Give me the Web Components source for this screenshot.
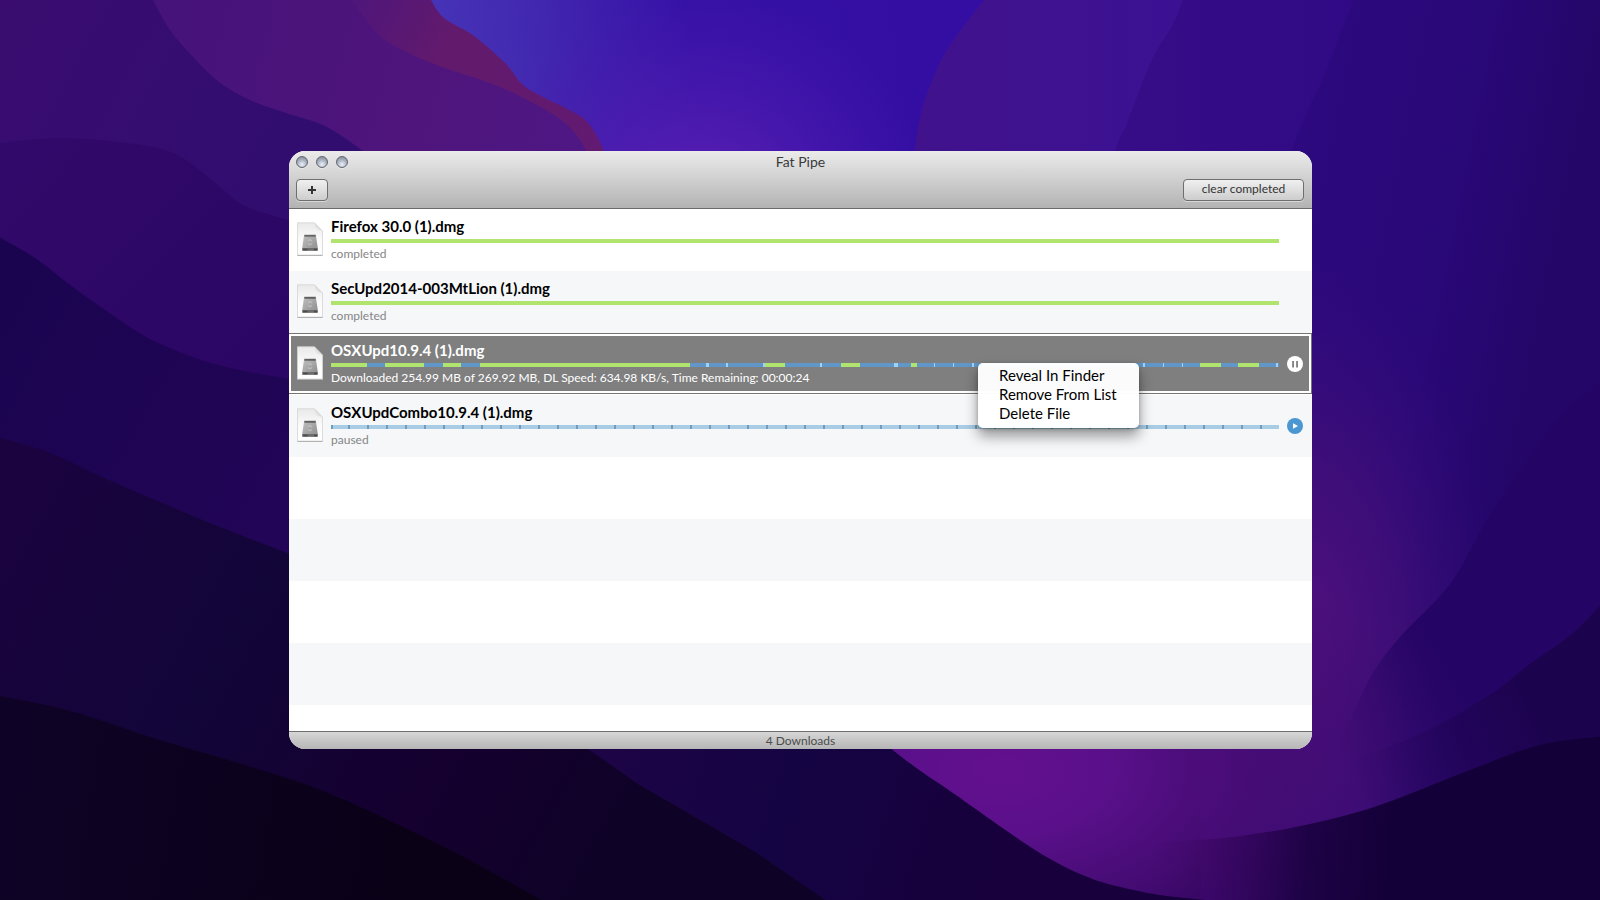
<!DOCTYPE html>
<html lang="en">
<head>
<meta charset="utf-8">
<meta name="viewport" content="width=device-width, initial-scale=1">
<title>Fat Pipe</title>
<style>
  html, body { margin: 0; min-height: 100%; background: #1c0450; }
  body { font-family: Lato, "Open Sans", "Noto Sans", sans-serif; font-size: 12px; color: #333; }
</style>
</head>
<body>
<fp-desktop>
  <fp-wallpaper slot="wallpaper"></fp-wallpaper>
  <fp-window heading="Fat Pipe">
    <fp-button slot="tools" label="Add download"><svg width="8" height="8" viewBox="0 0 8 8" aria-hidden="true"><path d="M3 0h2v3h3v2H5v3H3V5H0V3h3z" fill="#333"/></svg></fp-button>
    <fp-button slot="tools" wide>clear completed</fp-button>
    <fp-download name="Firefox 30.0 (1).dmg" state="completed">completed</fp-download>
    <fp-download name="SecUpd2014-003MtLion (1).dmg" state="completed">completed</fp-download>
    <fp-download name="OSXUpd10.9.4 (1).dmg" state="active" selected>Downloaded 254.99 MB of 269.92 MB, DL Speed: 634.98 KB/s, Time Remaining: 00:00:24
      <fp-menu slot="menu" items="Reveal In Finder|Remove From List|Delete File"></fp-menu>
    </fp-download>
    <fp-download name="OSXUpdCombo10.9.4 (1).dmg" state="paused">paused</fp-download>
    <span slot="status">4 Downloads</span>
  </fp-window>
</fp-desktop>

<script>
const define = (name, html, setup) => {
  const template = document.createElement('template');
  template.innerHTML = html;
  customElements.define(name, class extends HTMLElement {
    constructor() {
      super();
      this.attachShadow({ mode: 'open' }).append(template.content.cloneNode(true));
    }
    connectedCallback() { if (setup) setup(this, this.shadowRoot); }
  });
};

define('fp-desktop', `
  <style>
    :host { display: flex; position: relative; box-sizing: border-box; min-height: 100vh; padding: 151px 288px 151px 289px; overflow: hidden; }
    ::slotted(fp-window) { flex: 1; min-width: 0; }
    @media (max-width: 1100px) { :host { padding: 40px; } }
  </style>
  <slot name="wallpaper"></slot><slot></slot>`);

/* Each ridge is [ridge line points, corner points that close the shape, fill]. */
const RIDGES = [
  [[[984,0],[953,41],[938,67],[922,110],[915,150],[905,240]], [[900,460],[1600,460],[1600,0]], 'url(#r1)'],
  [[[1183,0],[1172,26],[1152,60],[1127,123],[1114,155],[1090,260]], [[1090,460],[1600,460],[1600,0]], 'url(#r2)'],
  [[[1353,0],[1325,73],[1310,105],[1297,135],[1285,170],[1240,300]], [[1200,900],[1600,900],[1600,0]], 'url(#r3)'],
  [[[1200,200],[1600,200]], [[1600,900],[1200,900]], 'url(#mag)'],
  [[[1605,378],[1563,413],[1527,460],[1487,520],[1450,584],[1400,637],[1373,673],[1350,720],[1330,770]], [[1330,860],[1600,860]], 'url(#rd)'],
  [[[1605,600],[1573,633],[1530,664],[1497,690],[1453,717],[1413,737],[1340,765]], [[1300,900],[1600,900]], 'url(#rdd)'],
  [[[640,300],[1600,300]], [[1600,900],[640,900]], 'url(#pur)'],
  [[[1605,736],[1540,745],[1470,770],[1380,805],[1310,824],[1233,837],[1160,842]], [[1100,900],[1600,900]], 'url(#hill)'],
  [[[431,0],[444,18],[474,36],[505,63],[522,84],[541,96],[577,114],[592,128],[606,155]], [[606,200],[150,200],[150,0]], 'url(#red)'],
  [[[352,0],[368,22],[388,42],[434,64],[500,87],[551,113],[574,132],[589,155]], [[589,200],[150,200],[150,0]], 'url(#pl)'],
  [[[153,0],[170,30],[194,58],[219,82],[250,100],[286,113],[327,127],[370,156]], [[370,300],[0,300],[0,0]], 'url(#l0)'],
  [[[0,143],[60,138],[128,143],[165,150],[189,162],[219,186],[238,202],[255,210],[295,222]], [[295,460],[0,460]], 'url(#l1)'],
  [[[-10,232],[35,258],[77,290],[138,332],[170,348],[204,361],[245,371],[295,380]], [[295,620],[0,620]], 'url(#l2)'],
  [[[-10,435],[48,452],[100,476],[153,499],[220,527],[295,556]], [[295,740],[620,740],[830,900],[0,900]], 'url(#l3)'],
  [[[-10,694],[51,706],[100,720],[153,738],[225,759],[296,781],[340,798],[378,815],[460,855],[545,902]], [[0,900]], 'url(#l4)'],
  [[[880,740],[915,767],[953,793],[1004,829],[1035,850],[1065,867],[1090,878],[1116,886],[1160,895],[1215,901]], [[828,902],[757,853],[714,828],[638,784],[575,740]], 'url(#l5)']
];

/* Catmull-Rom curve through the points, written as cubic Béziers. */
function ridgePath(points, corners) {
  let d = `M${points[0]}`;
  for (let i = 0; i < points.length - 1; i++) {
    const a = points[i - 1] || points[i], b = points[i], c = points[i + 1], e = points[i + 2] || c;
    d += `C${b[0] + (c[0] - a[0]) / 6} ${b[1] + (c[1] - a[1]) / 6} ${c[0] - (e[0] - b[0]) / 6} ${c[1] - (e[1] - b[1]) / 6} ${c[0]} ${c[1]}`;
  }
  return d + corners.map(p => `L${p}`).join('') + 'Z';
}

define('fp-wallpaper', `
  <style>
    :host { display: block; position: absolute; inset: 0; }
    svg { display: block; width: 100%; height: 100%; }
  </style>
  <svg viewBox="0 0 1600 900" preserveAspectRatio="xMidYMid slice" aria-hidden="true">
    <defs>
      <linearGradient id="sky" gradientUnits="userSpaceOnUse" x1="430" y1="60" x2="950" y2="0"><stop offset="0" stop-color="#4634b8"/><stop offset=".2" stop-color="#4228b0"/><stop offset=".5" stop-color="#3611a6"/><stop offset="1" stop-color="#340ea3"/></linearGradient>
      <radialGradient id="glow" gradientUnits="userSpaceOnUse" cx="700" cy="220" r="230"><stop offset="0" stop-color="#5e1fb4"/><stop offset=".35" stop-color="#541db2" stop-opacity=".8"/><stop offset="1" stop-color="#4a18ae" stop-opacity="0"/></radialGradient>
      <linearGradient id="r1" gradientUnits="userSpaceOnUse" x1="920" y1="60" x2="1180" y2="60"><stop offset="0" stop-color="#41128c"/><stop offset="1" stop-color="#3b1193"/></linearGradient>
      <linearGradient id="r2" gradientUnits="userSpaceOnUse" x1="1120" y1="0" x2="1350" y2="0"><stop offset="0" stop-color="#370c87"/><stop offset="1" stop-color="#300a86"/></linearGradient>
      <linearGradient id="r3" gradientUnits="userSpaceOnUse" x1="1300" y1="0" x2="1600" y2="60"><stop offset="0" stop-color="#2e0980"/><stop offset=".6" stop-color="#290878"/><stop offset="1" stop-color="#240668"/></linearGradient>
      <radialGradient id="mag" gradientUnits="userSpaceOnUse" cx="0" cy="0" r="1" gradientTransform="translate(1300 660) scale(200 400)"><stop offset="0" stop-color="#541180"/><stop offset=".5" stop-color="#461078" stop-opacity=".7"/><stop offset="1" stop-color="#3a0e7a" stop-opacity="0"/></radialGradient>
      <linearGradient id="rd" gradientUnits="userSpaceOnUse" x1="1330" y1="740" x2="1450" y2="670"><stop offset="0" stop-color="#2a0666" stop-opacity="0"/><stop offset="1" stop-color="#240464"/></linearGradient>
      <linearGradient id="rdd" gradientUnits="userSpaceOnUse" x1="1360" y1="800" x2="1540" y2="720"><stop offset="0" stop-color="#220458" stop-opacity="0"/><stop offset="1" stop-color="#1c034e"/></linearGradient>
      <radialGradient id="pur" gradientUnits="userSpaceOnUse" cx="0" cy="0" r="1" gradientTransform="translate(1000 770) scale(440 260)"><stop offset="0" stop-color="#64108e"/><stop offset=".25" stop-color="#5a108a"/><stop offset=".55" stop-color="#480c76" stop-opacity=".9"/><stop offset="1" stop-color="#34086a" stop-opacity="0"/></radialGradient>
      <linearGradient id="hill" gradientUnits="userSpaceOnUse" x1="1150" y1="840" x2="1390" y2="860"><stop offset="0" stop-color="#44086a" stop-opacity="0"/><stop offset=".3" stop-color="#36055e" stop-opacity=".7"/><stop offset=".65" stop-color="#1e0246"/><stop offset="1" stop-color="#140038"/></linearGradient>
      <linearGradient id="l0" gradientUnits="userSpaceOnUse" x1="0" y1="0" x2="300" y2="160"><stop offset="0" stop-color="#3a0c70"/><stop offset="1" stop-color="#310d70"/></linearGradient>
      <linearGradient id="l1" gradientUnits="userSpaceOnUse" x1="0" y1="140" x2="250" y2="380"><stop offset="0" stop-color="#31096a"/><stop offset="1" stop-color="#2b0664"/></linearGradient>
      <linearGradient id="l2" gradientUnits="userSpaceOnUse" x1="0" y1="300" x2="290" y2="460"><stop offset="0" stop-color="#1a0450"/><stop offset="1" stop-color="#220556"/></linearGradient>
      <linearGradient id="l3" gradientUnits="userSpaceOnUse" x1="0" y1="560" x2="600" y2="900"><stop offset="0" stop-color="#1a033f"/><stop offset=".35" stop-color="#120538"/><stop offset=".7" stop-color="#15002f"/><stop offset="1" stop-color="#0e0226"/></linearGradient>
      <linearGradient id="l4" gradientUnits="userSpaceOnUse" x1="0" y1="800" x2="400" y2="860"><stop offset="0" stop-color="#0e0326"/><stop offset="1" stop-color="#0a0117"/></linearGradient>
      <linearGradient id="l5" gradientUnits="userSpaceOnUse" x1="600" y1="750" x2="1000" y2="880"><stop offset="0" stop-color="#1d0446"/><stop offset=".45" stop-color="#150443"/><stop offset="1" stop-color="#17003b"/></linearGradient>
      <linearGradient id="pl" gradientUnits="userSpaceOnUse" x1="180" y1="40" x2="580" y2="140"><stop offset="0" stop-color="#46137a"/><stop offset=".6" stop-color="#4f157c"/><stop offset="1" stop-color="#4e1784"/></linearGradient>
      <linearGradient id="red" gradientUnits="userSpaceOnUse" x1="350" y1="20" x2="600" y2="150"><stop offset="0" stop-color="#50167a"/><stop offset=".35" stop-color="#621a6c"/><stop offset="1" stop-color="#621a72"/></linearGradient>
    </defs>
    <rect width="1600" height="900" fill="#1c0450"/>
    <rect x="400" width="600" height="460" fill="url(#sky)"/>
    <rect x="400" width="600" height="460" fill="url(#glow)"/>
    <g></g>
  </svg>`,
  (host, root) => {
    root.querySelector('g').innerHTML = RIDGES
      .map(([points, corners, fill]) => `<path d="${ridgePath(points, corners)}" fill="${fill}"/>`).join('');
  });

define('fp-window', `
  <style>
    :host { display: flex; flex-direction: column; position: relative; border-radius: 16px; overflow: hidden; background: #fff; }
    header { background: linear-gradient(#ebebec, #d2d2d2 45%, #b3b3b3); border-bottom: 1px solid #6b6b6b; }
    .bar { display: grid; grid-template-columns: 1fr auto 1fr; align-items: center; height: 22px; padding: 0 7px; }
    .lights { display: flex; gap: 8px; }
    .lights button { width: 12px; height: 12px; padding: 0; border: 1px solid #62666e; border-radius: 50%; background: radial-gradient(circle at 50% 75%, #dfe6f0 10%, #a4acba 55%, #7d8490); box-shadow: 0 1px 1px #eeea; }
    h1 { margin: 0; font-size: 14px; font-weight: 400; line-height: 22px; color: #3a3a3a; }
    .tools { display: flex; justify-content: space-between; padding: 6px 8px 7px 7px; }
    main { flex: 1 0 auto; background: repeating-linear-gradient(#fff 0 62px, #f5f7f9 62px 124px); }
    footer { display: flex; justify-content: center; border-top: 1px solid #6f6f6f; background: linear-gradient(#d6d6d6, #b6b6b6); color: #4c4c4c; font-size: 12px; line-height: 17px; }
  </style>
  <header>
    <div class="bar">
      <div class="lights"><button aria-label="Close"></button><button aria-label="Minimize"></button><button aria-label="Zoom"></button></div>
      <h1></h1>
    </div>
    <div class="tools"><slot name="tools"></slot></div>
  </header>
  <main><slot></slot></main>
  <footer><slot name="status"></slot></footer>`,
  (host, root) => { root.querySelector('h1').textContent = host.getAttribute('heading'); });

define('fp-button', `
  <style>
    :host { display: block; }
    button { display: flex; align-items: center; justify-content: center; box-sizing: border-box; height: 22px; min-width: 32px; padding: 0 8px; border: 1px solid #6e6e6e; border-radius: 4px; background: linear-gradient(#f0f0f0, #cdcdcd); box-shadow: 0 1px 0 #d8d8d8; font: inherit; line-height: 16px; color: #333; }
    :host([wide]) button { min-width: 121px; padding: 0 16px 2px; }
  </style>
  <button><slot></slot></button>`,
  (host, root) => {
    const label = host.getAttribute('label');
    if (label) root.querySelector('button').setAttribute('aria-label', label);
  });

define('fp-disk-icon', `
  <style>:host { display: block; width: 26px; height: 34px; } svg { display: block; }</style>
  <svg width="26" height="34" viewBox="0 0 26 34" aria-hidden="true">
    <defs>
      <linearGradient id="p" x1="0" y1="0" x2="0" y2="1"><stop offset="0" stop-color="#e9e9e9"/><stop offset=".5" stop-color="#fafafa"/><stop offset="1" stop-color="#fff"/></linearGradient>
      <linearGradient id="d" x1="0" y1="0" x2="1" y2="1"><stop offset="0" stop-color="#c0c0c0"/><stop offset="1" stop-color="#8c8c8c"/></linearGradient>
      <linearGradient id="f" x1="0" y1="1" x2="1" y2="0"><stop offset="0" stop-color="#fff"/><stop offset=".5" stop-color="#d8d8d8"/><stop offset=".7" stop-color="#9c9c9c"/></linearGradient>
    </defs>
    <path d="M.5 .8H17.5L25.5 9V33.3H.5Z" fill="url(#p)" stroke="#d4d4d4" stroke-width=".8"/>
    <path d="M.5 33.4H25.5" stroke="#adadad" stroke-width="1"/>
    <path d="M17.5 .8C18.5 4 18 6 17.8 8.2C20.5 7.8 23 7.8 25.5 9.2Z" fill="url(#f)"/>
    <path d="M7.2 12.5H18.8L20.7 25.3V28.6H5.3V25.3Z" fill="url(#d)"/>
    <path d="M7.4 13.2H18.6V14.6H7.4Z" fill="#4b4b4b"/>
    <path d="M5.3 26H20.7V28.8H5.3Z" fill="#6c6c6c"/>
    <path d="M6.2 26.8H10.5V28.2H6.2ZM17 26.8H20V28.2H17Z" fill="#4a4a4a"/>
    <path d="M11 18.5Q13 17 15 18.5M11 21.8Q13 23.2 15 21.8" fill="none" stroke="#d2d2d2" stroke-width=".7"/>
  </svg>`);

/* Chunks are [start, end, colour], in units of a 948-unit file map. */
const GREEN = '#b1e46f', BLUE = '#6096c8', LIGHT = '#9fd2f5', TICK = '#6f9cbc', UNITS = 948;
const MAPS = {
  completed: { base: GREEN, chunks: [] },
  active: { base: BLUE, chunks: [
    [0, 36, GREEN], [54, 93, GREEN], [112, 130, GREEN], [149, 359, GREEN],
    [375, 378, LIGHT], [395, 397, LIGHT], [432, 434, LIGHT], [434, 454, GREEN], [489, 491, LIGHT],
    [510, 529, GREEN], [563, 567, LIGHT], [580, 586, GREEN], [603, 604, LIGHT], [622, 623, LIGHT],
    [641, 643, LIGHT], [812, 814, LIGHT], [832, 833, LIGHT], [851, 852, LIGHT],
    [869, 890, GREEN], [907, 928, GREEN], [945, 947, LIGHT]] },
  paused: { base: '#a8cce4', chunks: [[0, 2, TICK],
    ...Array.from({ length: 49 }, (_, i) => [19 * i + 17, 19 * i + 19, TICK])] }
};

define('fp-chunks', `
  <style>:host { display: block; height: 4px; }</style>`,
  host => {
    const { base, chunks } = MAPS[host.getAttribute('state')];
    const pct = n => (n / UNITS * 100) + '%';
    const stops = [];
    let at = 0;
    for (const [from, to, colour] of chunks) {
      stops.push(`${base} ${pct(at)} ${pct(from)}`, `${colour} ${pct(from)} ${pct(to)}`);
      at = to;
    }
    stops.push(`${base} ${pct(at)} 100%`);
    host.style.background = `linear-gradient(90deg, ${stops.join(', ')})`;
  });

define('fp-download', `
  <style>
    :host { display: flex; position: relative; box-sizing: border-box; height: 62px; gap: 8px; padding: 0 9px 0 8px; }
    fp-disk-icon { margin-top: 13px; }
    .info { flex: 1; min-width: 0; padding-top: 8px; }
    h2 { margin: 0 0 4px; font-size: 15px; font-weight: 700; line-height: 18px; color: #000; }
    p { margin: 3px 0 0; font-size: 12px; line-height: 16px; color: #858585; white-space: nowrap; }
    .act { width: 16px; height: 16px; margin-top: 23px; padding: 0; border: 0; border-radius: 50%; background: #4b97d2; }
    .act svg { display: block; }
    .gap { width: 16px; }
    :host([selected]) { z-index: 1; height: 61px; margin-bottom: 1px; }
    :host([selected])::before { content: ""; position: absolute; z-index: -1; inset: 0; border: solid #757575; border-width: 1px 1px 1px 0; background: #7f7f7f; box-shadow: inset 0 0 0 2px #fff; }
    :host([selected]) h2, :host([selected]) p { color: #fff; }
    :host([selected]) .act { background: #fff; }
  </style>
  <fp-disk-icon></fp-disk-icon>
  <div class="info"><h2></h2><p><slot></slot></p></div>
  <span class="gap"></span>
  <slot name="menu"></slot>`,
  (host, root) => {
    const state = host.getAttribute('state');
    const title = root.querySelector('h2');
    title.textContent = host.getAttribute('name');
    const map = document.createElement('fp-chunks');
    map.setAttribute('state', state);
    title.after(map);
    if (state === 'completed') return;
    const button = document.createElement('button');
    button.className = 'act';
    button.setAttribute('aria-label', state === 'active' ? 'Pause' : 'Resume');
    button.innerHTML = state === 'active'
      ? '<svg width="16" height="16" viewBox="0 0 16 16"><path d="M5.2 5h1.7v6.5H5.2zM9.2 5h1.7v6.5H9.2z" fill="#777"/></svg>'
      : '<svg width="16" height="16" viewBox="0 0 16 16"><path d="M6 5.2l5 2.8-5 2.8z" fill="#fff"/></svg>';
    root.querySelector('.gap').replaceWith(button);
  });

define('fp-menu', `
  <style>
    :host { display: block; position: absolute; top: 30px; right: 173px; box-sizing: border-box; min-width: 161px; padding: 3px 0 5px; border-radius: 5px; background: #fffffff8; box-shadow: 0 8px 14px #0006, 0 1px 4px #0003; }
    button { display: block; width: 100%; padding: 0 21px; border: 0; background: none; font: inherit; font-size: 15px; line-height: 19px; text-align: left; white-space: nowrap; color: #000; }
  </style>
  <div role="menu"></div>`,
  (host, root) => {
    const menu = root.querySelector('div');
    for (const text of host.getAttribute('items').split('|')) {
      const item = document.createElement('button');
      item.setAttribute('role', 'menuitem');
      item.textContent = text;
      menu.append(item);
    }
  });
</script>
</body>
</html>
